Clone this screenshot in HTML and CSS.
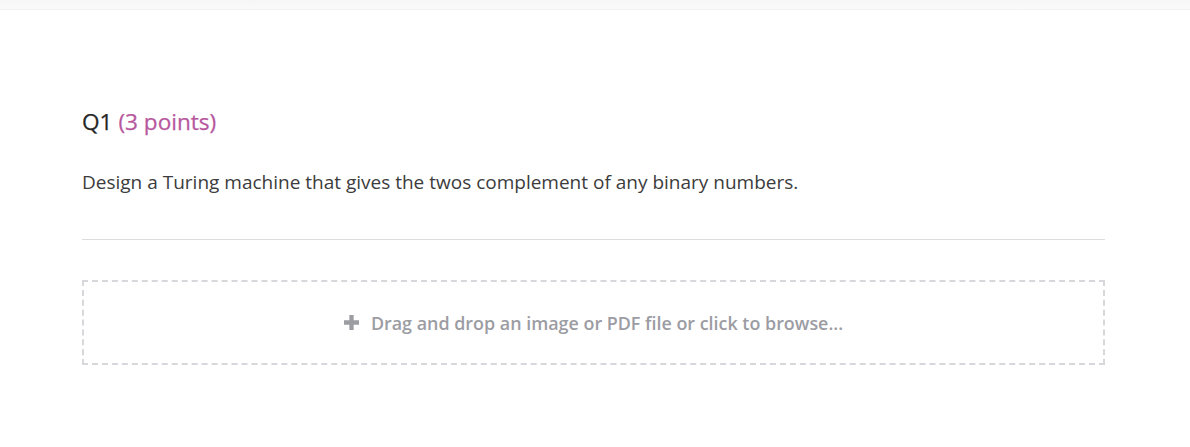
FILE: index.html
```html
<!DOCTYPE html>
<html>
<head>
<meta charset="utf-8">
<link rel="stylesheet" href="styles.css">
</head>
<body>
<div class="topbar"></div>
<main class="question">
  <h2 class="q-title">Q1 <span class="points">(3 points)</span></h2>
  <p class="q-text">Design a Turing machine that gives the twos complement of any binary numbers.</p>
  <hr class="divider">
  <div class="dropzone">
    <svg class="plus" width="15" height="15" viewBox="0 0 14 14"><path d="M5 0h4v5h5v4H9v5H5V9H0V5h5z" fill="#9c9ca3"/></svg>
    <span>Drag and drop an image or PDF file or click to browse...</span>
  </div>
</main>
</body>
</html>
```
FILE: styles.css
```css
html, body {
  margin: 0;
  padding: 0;
  background: #fff;
  font-family: "Open Sans", "Noto Sans", sans-serif;
}
.topbar {
  height: 9px;
  background: linear-gradient(#f6f6f6, #fafafa);
  border-bottom: 1px solid #f2f2f2;
}
.question {
  margin: 0 85px 0 82px;
  padding-top: 97px;
}
.q-title {
  margin: 0;
  font-size: 22.6px;
  font-weight: 400;
  color: #262626;
  line-height: 30px;
  -webkit-text-stroke: 0.25px currentColor;
}
.points {
  color: #b7589e;
}
.q-text {
  margin: 33px 0 0;
  font-size: 19px;
  color: #3c3c3c;
  line-height: 24px;
}
.divider {
  border: 0;
  border-top: 1px solid #dddddd;
  margin: 45px 0 0;
}
.dropzone {
  margin-top: 40px;
  height: 81px;
  border: 2px dashed #d8d8dc;
  display: flex;
  align-items: center;
  justify-content: center;
  gap: 12px;
  color: #9c9ca3;
  font-size: 17.9px;
  font-weight: 600;
}
```
